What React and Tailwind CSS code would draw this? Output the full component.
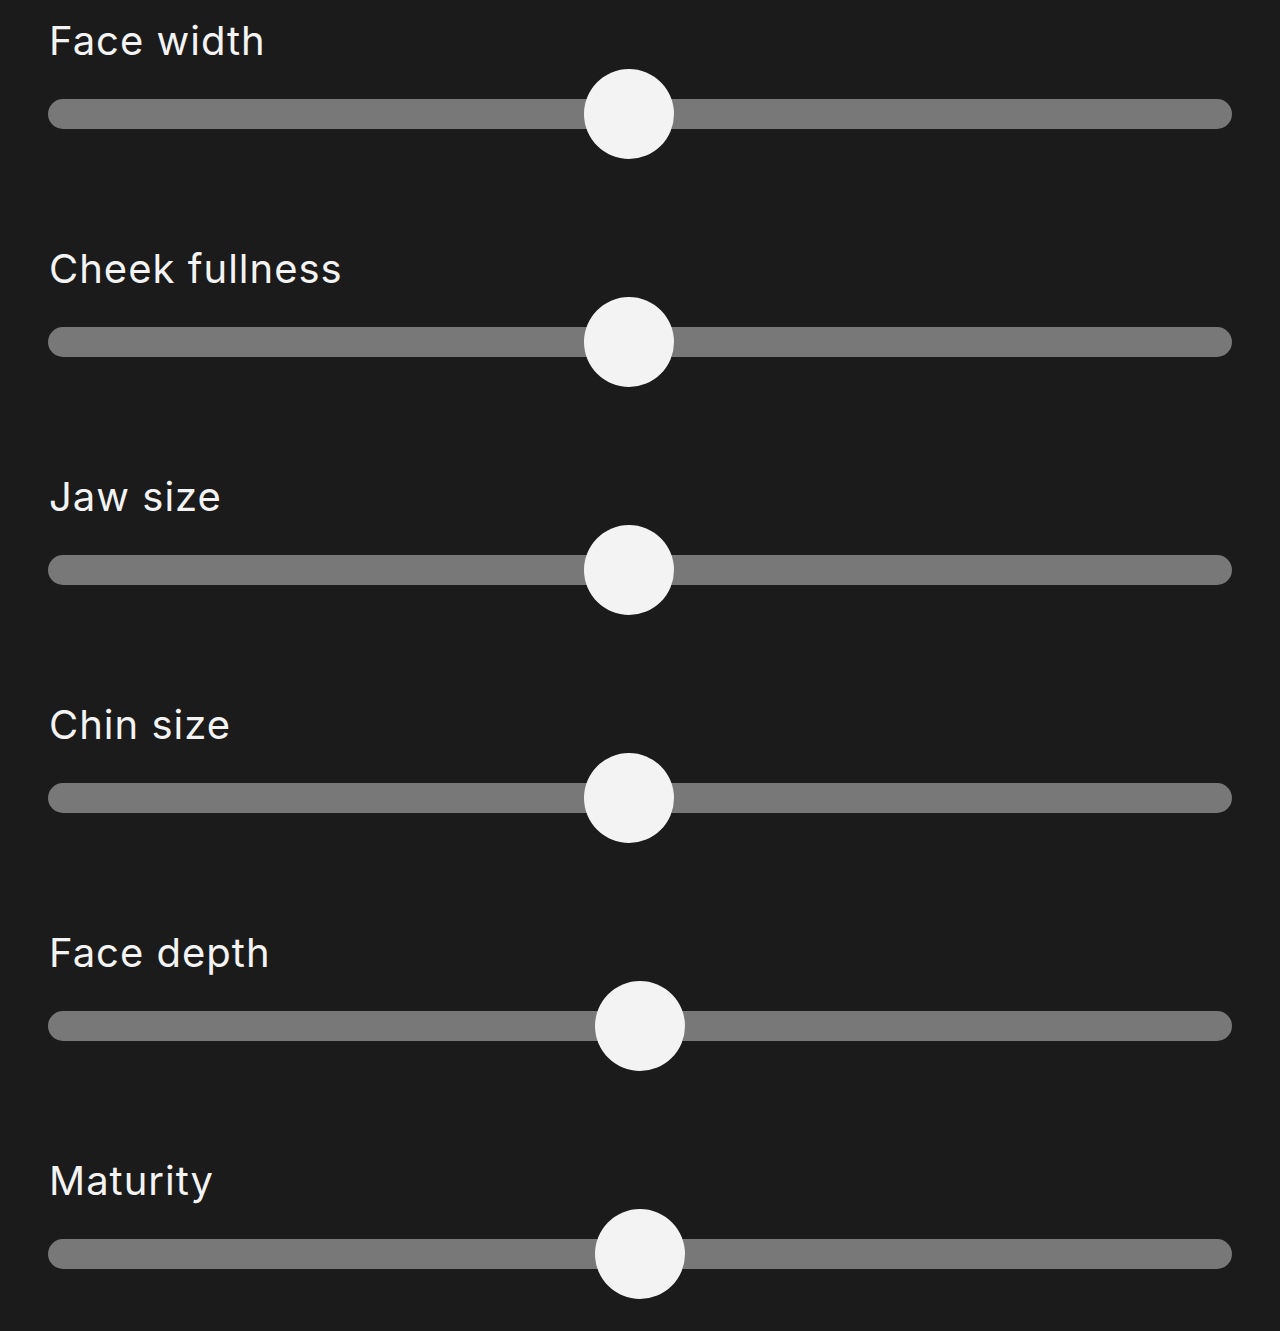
import React, { useState } from "react";

const initialSliders = [
  { id: "faceWidth", label: "Face width", value: 0.49 },
  { id: "cheekFullness", label: "Cheek fullness", value: 0.49 },
  { id: "jawSize", label: "Jaw size", value: 0.49 },
  { id: "chinSize", label: "Chin size", value: 0.49 },
  { id: "faceDepth", label: "Face depth", value: 0.5 },
  { id: "maturity", label: "Maturity", value: 0.5 },
];

const THUMB = 90;

const Slider = ({ value }) => {
  // thumb centre travels between the two ends of the track, inset by its radius
  const left = `calc((100% - ${THUMB}px) * ${value})`;
  return (
    <div className="relative h-[90px] flex items-center">
      <div className="h-[30px] w-full rounded-full bg-[#787878]" />
      <div
        className="absolute top-0 h-[90px] w-[90px] rounded-full bg-[#f3f3f3]"
        style={{ left }}
      />
    </div>
  );
};

export default function App() {
  const [sliders] = useState(initialSliders);

  return (
    <div
      className="min-h-[1331px] bg-[#1b1b1b] px-12 text-[#f3f3f3]"
      style={{ fontFamily: "Inter, 'Noto Sans', sans-serif" }}
    >
      {sliders.map((s) => (
        <div key={s.id} className="h-[228px] pt-4">
          <div className="pl-px text-[40px] leading-[50px] tracking-[0.025em]">
            {s.label}
          </div>
          <div className="mt-[3px]">
            <Slider value={s.value} />
          </div>
        </div>
      ))}
    </div>
  );
}
